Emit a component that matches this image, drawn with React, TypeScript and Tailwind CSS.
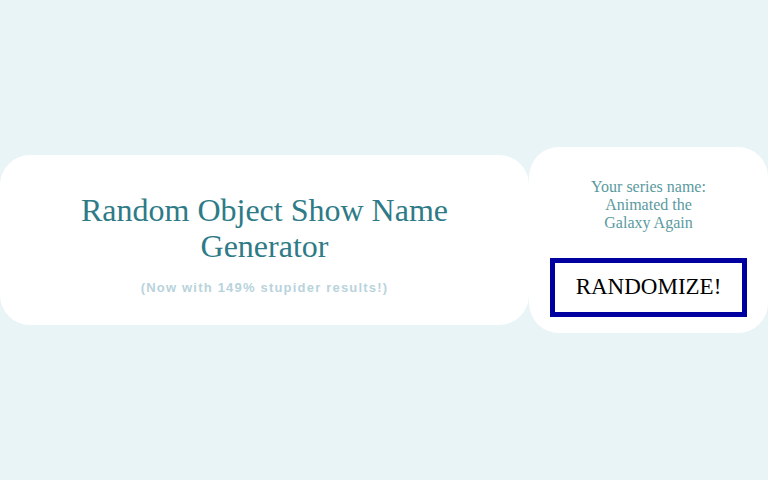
export default function App() {
  return (
    <div
      className="flex h-[480px] w-[768px] items-center bg-[#e8f4f5]"
      style={{ fontFamily: '"Liberation Serif", serif' }}
    >
      {/* Heading card */}
      <div className="flex h-[170px] w-[529px] flex-col items-center justify-center rounded-[30px] bg-white pt-[7px]">
        <h1 className="text-center text-[32px] leading-[36px] text-[#2e7b87]">
          Random Object Show Name
          <br />
          Generator
        </h1>
        <p
          className="mt-[16px] text-[13px] leading-[15px] font-bold tracking-[1.2px] text-[#b9d3dc]"
          style={{ fontFamily: '"Liberation Sans", sans-serif' }}
        >
          (Now with 149% stupider results!)
        </p>
      </div>

      {/* Result card */}
      <div className="flex h-[186px] w-[239px] flex-col items-center rounded-[30px] bg-white pt-[31px]">
        <p className="text-center text-[16px] leading-[18px] text-[#5a9aa0]">
          Your series name:
          <br />
          Animated the
          <br />
          Galaxy Again
        </p>
        <button className="mt-[26px] flex h-[59px] w-[197px] items-center justify-center border-[5px] border-[#0000a0] bg-white text-[23px] text-black">
          RANDOMIZE!
        </button>
      </div>
    </div>
  );
}
